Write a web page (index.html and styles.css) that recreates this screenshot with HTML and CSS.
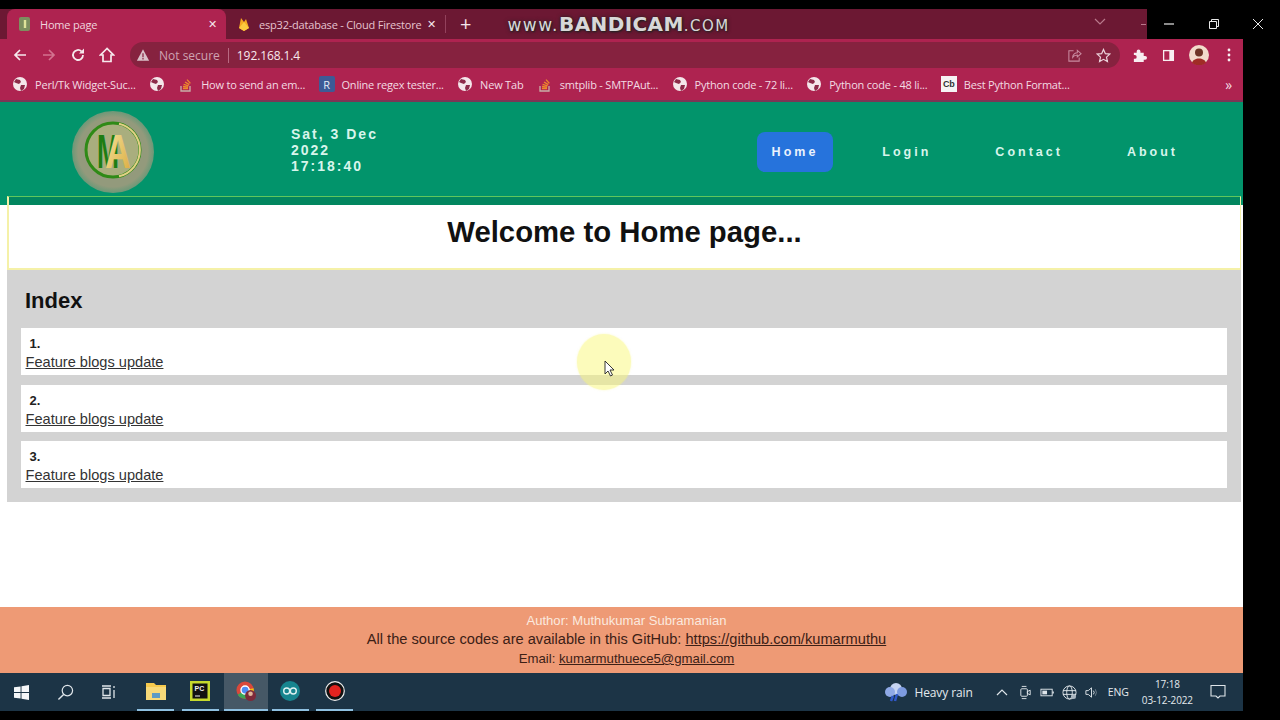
FILE: index.html
```html
<!DOCTYPE html>
<html>
<head>
    <meta charset="utf-8">
    <title>Home page</title>
    <link rel="stylesheet" href="styles.css">
</head>
<body>
<svg class="defs" width="0" height="0">
    <symbol id="globe" viewBox="0 0 16 16">
        <circle cx="8" cy="8" r="7" fill="#f4e6ea"/>
        <path d="M4 3l4 1 1 2-2 2-3-1-2-1zM9 9l4 0-1 4-3 2-1-3z" fill="#8d2a49"/>
    </symbol>
    <symbol id="so" viewBox="0 0 16 16">
        <path d="M3 10v5h9v-5" fill="none" stroke="#c9b0a8" stroke-width="1.3"/>
        <path d="M5 12.5h5M5 10.5l5 .6M5.6 8.4l5 1.4M7 6l4.3 2.6M9 3.6l3.4 3.8" fill="none" stroke="#ee8a2c" stroke-width="1.3"/>
    </symbol>
</svg>

<div class="tabrow">
    <div class="tabstrip">
        <div class="tab active">
            <svg class="favicon" viewBox="0 0 16 16"><rect x="2" y="1" width="11" height="14" rx="2" fill="#7d8f5f"/><path d="M8 4v8" stroke="#dfe39a" stroke-width="2.4"/></svg>
            <span class="tab-title">Home page</span>
            <span class="tab-close">✕</span>
        </div>
        <div class="tab">
            <svg class="favicon" viewBox="0 0 16 16"><path d="M3 12L5 2l3 4 2-3 3 9-5 3z" fill="#f6a821"/><path d="M3 12l5-6 5 6-5 3z" fill="#fcca3f"/></svg>
            <span class="tab-title">esp32-database - Cloud Firestore</span>
            <span class="tab-close">✕</span>
        </div>
        <span class="tab-sep"></span>
        <span class="tab-new">+</span>
        <div class="watermark">www.<b>BANDICAM</b><small>.COM</small></div>
        <svg class="tab-menu" viewBox="0 0 12 8"><path d="M1 1l5 5 5-5" fill="none" stroke="#b9798c" stroke-width="1.2"/></svg>
        <span class="tab-min"></span>
    </div>
    <div class="winctl">
        <svg viewBox="0 0 12 12"><path d="M1 6h10" stroke="#e8e8e8" stroke-width="1.2"/></svg>
        <svg viewBox="0 0 12 12"><path d="M1.5 3.5h7v7h-7zM3.5 3.5v-2h7v7h-2" fill="none" stroke="#e8e8e8"/></svg>
        <svg viewBox="0 0 12 12"><path d="M1 1l10 10M11 1L1 11" stroke="#e8e8e8"/></svg>
    </div>
</div>

<div class="window">
    <div class="toolbar">
        <svg class="tool" viewBox="0 0 16 16"><path d="M14 8H3M8 3L3 8l5 5" fill="none" stroke="#f6e9ed" stroke-width="1.7"/></svg>
        <svg class="tool" viewBox="0 0 16 16"><path d="M2 8h11M8 3l5 5-5 5" fill="none" stroke="#d3728f" stroke-width="1.7"/></svg>
        <svg class="tool" viewBox="0 0 16 16"><path d="M13 8a5 5 0 1 1-1.5-3.6" fill="none" stroke="#f6e9ed" stroke-width="1.8"/><path d="M14 1.5v5H9z" fill="#f6e9ed"/></svg>
        <svg class="tool" viewBox="0 0 16 16"><path d="M8 1.500L1.500 8H4v6.500h8V8h2.500z" fill="none" stroke="#f6e9ed" stroke-width="1.7"/></svg>
        <div class="omnibox">
            <svg class="warn" viewBox="0 0 16 16"><path d="M8 1.500L15 14.500H1z" fill="#d9c0c8"/><path d="M8 6v4.500M8 11.500v1.500" stroke="#86223f" stroke-width="1.400"/></svg>
            <span class="insecure">Not secure</span>
            <span class="omni-sep"></span>
            <span class="url">192.168.1.4</span>
            <svg class="omni-icon share" viewBox="0 0 16 16"><path d="M7 3H2v11h11v-4M6 10c0-3 3-5 5-5V2.500L15 6l-4 3.500V7.500c-2 0-4 1-5 2.500z" fill="none" stroke="#c98ba0" stroke-width="1.100"/></svg>
            <svg class="omni-icon" viewBox="0 0 16 16"><path d="M8 1.500l2 4.500 4.700.5-3.500 3.200 1 4.800L8 12.100 3.800 14.500l1-4.800L1.300 6.500 6 6z" fill="none" stroke="#ecd3db" stroke-width="1.300"/></svg>
        </div>
        <svg class="ext" viewBox="0 0 16 16"><path d="M2 5h3V3.500a2 2 0 0 1 4 0V5h3.500v3.500H14a2 2 0 0 1 0 4h-1.500V15H2v-3.500h1a2 2 0 0 0 0-4H2z" fill="#f8eef1"/></svg>
        <svg class="panel" viewBox="0 0 16 16"><rect x="2" y="2" width="12" height="12" fill="none" stroke="#f8eef1" stroke-width="1.600"/><rect x="9" y="2" width="5" height="12" fill="#f8eef1"/></svg>
        <svg class="avatar" viewBox="0 0 20 20"><circle cx="10" cy="10" r="10" fill="#f2dccb"/><circle cx="10" cy="7.500" r="4" fill="#6e3526"/><path d="M3 18c1-6 13-6 14 0l-4 2H7z" fill="#a02c26"/></svg>
        <svg class="dots" viewBox="0 0 4 16"><circle cx="2" cy="3" r="1.400" fill="#f8eef1"/><circle cx="2" cy="8" r="1.400" fill="#f8eef1"/><circle cx="2" cy="13" r="1.400" fill="#f8eef1"/></svg>
    </div>

    <div class="bookmarks">
        <a class="mark"><svg><use href="#globe"/></svg>Perl/Tk Widget-Suc...</a>
        <a class="mark"><svg><use href="#globe"/></svg></a>
        <a class="mark"><svg><use href="#so"/></svg>How to send an em...</a>
        <a class="mark"><span class="mark-r">R</span>Online regex tester...</a>
        <a class="mark"><svg><use href="#globe"/></svg>New Tab</a>
        <a class="mark"><svg><use href="#so"/></svg>smtplib - SMTPAut...</a>
        <a class="mark"><svg><use href="#globe"/></svg>Python code - 72 li...</a>
        <a class="mark"><svg><use href="#globe"/></svg>Python code - 48 li...</a>
        <a class="mark"><span class="mark-cb">Cb</span>Best Python Format...</a>
        <span class="mark-more">»</span>
    </div>

    <div class="page">
        <header class="site-head">
            <svg class="logo" viewBox="0 0 82 82">
                <defs>
                    <linearGradient id="gold" x1="0" y1="0" x2="1" y2="1"><stop offset="0" stop-color="#f6e6a0"/><stop offset="1" stop-color="#d9a93c"/></linearGradient>
                    <radialGradient id="halo"><stop offset=".85" stop-color="#939a7c"/><stop offset="1" stop-color="#8f9a7c" stop-opacity=".75"/></radialGradient>
                </defs>
                <circle cx="41" cy="41" r="41" fill="url(#halo)"/>
                <circle cx="41" cy="39" r="27" fill="#a9ae7e" stroke="#2f8a16" stroke-width="3"/>
                <path d="M47 12.700a27 27 0 0 1 0 52.600" fill="none" stroke="#e3cf86" stroke-width="2"/>
                <text class="logo-m" transform="translate(25 57) scale(.55 1)">M</text>
                <text class="logo-a" transform="translate(33 57) scale(.75 1)" fill="url(#gold)">A</text>
            </svg>
            <div class="clock">
                <div>Sat, 3 Dec</div>
                <div>2022</div>
                <div>17:18:40</div>
            </div>
            <nav class="nav">
                <a class="nav-item current">Home</a>
                <a class="nav-item">Login</a>
                <a class="nav-item">Contact</a>
                <a class="nav-item">About</a>
            </nav>
        </header>

        <section class="welcome">
            <h1>Welcome to Home page...</h1>
        </section>

        <section class="index">
            <h2>Index</h2>
            <div class="card">
                <div class="card-num">1.</div>
                <a class="card-link">Feature blogs update</a>
            </div>
            <div class="card">
                <div class="card-num">2.</div>
                <a class="card-link">Feature blogs update</a>
            </div>
            <div class="card">
                <div class="card-num">3.</div>
                <a class="card-link">Feature blogs update</a>
            </div>
        </section>

        <footer class="site-foot">
            <div class="author">Author: Muthukumar Subramanian</div>
            <div class="source">All the source codes are available in this GitHub: <a>https://github.com/kumarmuthu</a></div>
            <div class="email">Email: <a>kumarmuthuece5@gmail.com</a></div>
        </footer>

        <div class="cursor-glow">
            <svg class="cursor" viewBox="0 0 12 18"><path d="M1 1v13l3-3 2.500 5 2-1-2.500-5h4z" fill="#fff" stroke="#222" stroke-width=".9"/></svg>
        </div>
    </div>

    <div class="taskbar">
        <svg class="task-start" viewBox="0 0 16 16"><path d="M0 2.500l7-1v6H0zM8 1.300l8-1.200v7.400H8zM0 8.500h7v6l-7-1zM8 8.500h8v7.400l-8-1.200z" fill="#f4f6f8"/></svg>
        <svg class="task-search" viewBox="0 0 18 18"><circle cx="11" cy="7" r="5.500" fill="none" stroke="#dfe5ea" stroke-width="1.300"/><path d="M7 11l-5.500 5.500" stroke="#dfe5ea" stroke-width="1.500"/></svg>
        <svg class="task-view" viewBox="0 0 16 14"><path d="M1 1h9M1 13h9M2 3.500h7v7H2zM13 1v2M13 5v8" fill="none" stroke="#dfe5ea" stroke-width="1.300"/></svg>
        <div class="task-app">
            <svg viewBox="0 0 20 18"><path d="M0 1h8l2 2h10v3H0z" fill="#f5c94d"/><rect y="5" width="20" height="13" fill="#f7d978"/><rect x="6" y="11" width="8" height="5" fill="#5d9bc4"/></svg>
        </div>
        <div class="task-app">
            <svg viewBox="0 0 20 20"><rect width="20" height="20" fill="#c6d92d"/><rect x="2.500" y="2.500" width="15" height="15" fill="#111"/><path d="M5 15h5" stroke="#eee"/><text class="pc-mark" x="4.500" y="10">PC</text></svg>
        </div>
        <div class="task-app selected">
            <svg viewBox="0 0 22 22"><circle cx="10" cy="10" r="9.500" fill="#d9483b"/><path d="M10 10L1.800 15a9.500 9.500 0 0 0 12 3.500z" fill="#3aa757"/><path d="M10 10l4 8.500A9.500 9.500 0 0 0 19.400 8z" fill="#f4c20d"/><circle cx="10" cy="10" r="4.500" fill="#4c8bf5" stroke="#fff" stroke-width="1.500"/><circle cx="16" cy="16" r="6" fill="#7d2a3a"/><circle cx="16" cy="14" r="2.500" fill="#e0b59a"/></svg>
        </div>
        <div class="task-app">
            <svg viewBox="0 0 20 20"><circle cx="10" cy="10" r="10" fill="#17858f"/><circle cx="6.700" cy="10" r="3" fill="none" stroke="#dff2f2" stroke-width="1.400"/><circle cx="13.300" cy="10" r="3" fill="none" stroke="#dff2f2" stroke-width="1.400"/></svg>
        </div>
        <div class="task-app">
            <svg viewBox="0 0 20 20"><circle cx="10" cy="10" r="9.300" fill="#111" stroke="#eee" stroke-width="1.200"/><circle cx="10" cy="10" r="6" fill="#e2231f"/></svg>
        </div>
        <div class="tray">
            <svg class="weather" viewBox="0 0 24 20"><circle cx="12" cy="7" r="6" fill="#c6d4f2"/><circle cx="6" cy="10" r="5" fill="#8fa9e6"/><circle cx="18" cy="10" r="5" fill="#7d9be0"/><path d="M9 14l-2 5M13 12l-2 7" stroke="#2f58c9" stroke-width="2.500"/></svg>
            <span class="weather-text">Heavy rain</span>
            <svg class="tray-up" viewBox="0 0 12 8"><path d="M1 7l5-5 5 5" fill="none" stroke="#dfe5ea" stroke-width="1.200"/></svg>
            <svg class="tray-icon" viewBox="0 0 14 16"><rect x="2" y="4" width="7" height="8" rx="1" fill="none" stroke="#dfe5ea"/><path d="M9 7l3-1.500v5L9 9zM3 1.500h5M3 14.500h5" fill="none" stroke="#dfe5ea"/></svg>
            <svg class="tray-icon" viewBox="0 0 16 16"><rect x="1" y="4.500" width="12" height="7" fill="none" stroke="#dfe5ea"/><rect x="2.500" y="6" width="5" height="4" fill="#dfe5ea"/><path d="M14 7v2" stroke="#dfe5ea" stroke-width="1.500"/></svg>
            <svg class="tray-icon" viewBox="0 0 16 16"><circle cx="8" cy="8" r="7" fill="none" stroke="#dfe5ea"/><ellipse cx="8" cy="8" rx="3" ry="7" fill="none" stroke="#dfe5ea"/><path d="M1 6h14M1 10h14" stroke="#dfe5ea"/><circle cx="12.500" cy="12.500" r="2.500" fill="#a9b5bf"/></svg>
            <svg class="tray-icon" viewBox="0 0 16 16"><path d="M2 6h2.500L8 3v10L4.500 10H2z" fill="none" stroke="#dfe5ea"/><path d="M10 6a3 3 0 0 1 0 4" fill="none" stroke="#dfe5ea"/><path d="M12 4.500a6 6 0 0 1 0 7" fill="none" stroke="#74838f"/></svg>
            <span class="lang">ENG</span>
            <div class="tray-clock">
                <div>17:18</div>
                <div>03-12-2022</div>
            </div>
            <svg class="notify" viewBox="0 0 16 16"><path d="M1 1.500h14v10.500h-5l-2 2-2-2H1z" fill="none" stroke="#dfe5ea" stroke-width="1.100"/></svg>
        </div>
    </div>
</div>
</body>
</html>
```

FILE: styles.css
```css
html, body {
    margin: 0;
    height: 720px;
    overflow: hidden;
    background: #000;
    font-family: "Liberation Sans", Arial, sans-serif;
}
.defs { position: absolute; }
a { color: inherit; }

/* browser chrome */
.tabrow {
    display: flex;
    height: 30px;
    padding-top: 9px;
}
.tabstrip {
    width: 1147px;
    display: flex;
    align-items: center;
    background: #6c1833;
    padding-left: 7px;
    box-sizing: border-box;
    font-family: "Open Sans", sans-serif;
    overflow: hidden;
}
.tab {
    width: 219px;
    height: 30px;
    box-sizing: border-box;
    display: flex;
    align-items: center;
    padding: 0 9px 0 10px;
    color: #e6c3cf;
    font-size: 11px;
    letter-spacing: -.2px;
}
.tab.active {
    background: #ae2350;
    border-radius: 8px 8px 0 0;
    color: #f0d5de;
}
.favicon { width: 16px; height: 16px; flex: none; margin-right: 7px; }
.tab-title { flex: 1; white-space: nowrap; overflow: hidden; }
.tab-close { font-size: 11px; color: #f5e6eb; margin-left: 4px; font-family: "DejaVu Sans", sans-serif; }
.tab-sep { width: 1px; height: 18px; background: #93415c; }
.tab-new { color: #f5e6eb; font-size: 20px; margin-left: 14px; font-weight: 400; line-height: 20px; }
.watermark {
    margin-left: 36px;
    color: #d8d8d8;
    font-family: "DejaVu Sans", sans-serif;
    font-size: 17px;
    letter-spacing: 1.500px;
    text-shadow: 0 0 4px #222, 1px 1px 2px #222;
    white-space: nowrap;
}
.watermark b { font-weight: 700; font-size: 20px; letter-spacing: .4px; }
.watermark small { font-size: 15px; letter-spacing: 1.500px; }
.tab-menu { width: 12px; height: 8px; margin-left: 364px; margin-top: -4px; flex: none; }
.tab-min { width: 5px; height: 1px; background: #b9798c; margin-left: 35px; flex: none; }
.winctl {
    width: 133px;
    display: flex;
    align-items: center;
    justify-content: space-between;
    padding: 0 16px 0 16px;
    box-sizing: border-box;
}
.winctl svg { width: 12px; height: 12px; }

.window { width: 1243px; }
.toolbar {
    height: 31px;
    box-sizing: border-box;
    padding-top: 1px;
    background: #ae2350;
    display: flex;
    align-items: center;
    padding-left: 12px;
}
.tool { width: 16px; height: 16px; margin-right: 13px; flex: none; }
.omnibox {
    width: 990px;
    height: 26px;
    margin-left: 2px;
    border-radius: 13px;
    background: #86223f;
    display: flex;
    align-items: center;
    padding-left: 6px;
    box-sizing: border-box;
    font-family: "Open Sans", sans-serif;
    font-size: 12px;
}
.warn { width: 14px; height: 14px; margin-right: 9px; }
.insecure { color: #cfa3b2; }
.omni-sep { width: 1px; height: 15px; background: #b86a82; margin: 0 8px; }
.url { color: #f7e9ee; letter-spacing: -.1px; }
.omni-icon { width: 15px; height: 15px; margin-left: 14px; }
.share { margin-left: auto; }
.omni-icon:last-child { margin-right: 9px; }
.ext { width: 15px; height: 15px; margin-left: 12px; }
.panel { width: 13px; height: 13px; margin-left: 15px; }
.avatar { width: 20px; height: 20px; margin-left: 14px; }
.dots { width: 4px; height: 16px; margin-left: 18px; }

.bookmarks {
    height: 30px;
    box-sizing: border-box;
    padding-bottom: 2px;
    background: #ae2350;
    display: flex;
    align-items: center;
    gap: 13.300px;
    padding-left: 12px;
    font-family: "Open Sans", sans-serif;
    font-size: 11px;
    letter-spacing: -.2px;
    color: #f3dbe3;
    white-space: nowrap;
}
.mark { display: flex; align-items: center; gap: 7px; }
.mark svg { width: 16px; height: 16px; }
.mark-r, .mark-cb {
    width: 16px;
    height: 16px;
    display: flex;
    align-items: center;
    justify-content: center;
    font-size: 11px;
}
.mark-r { background: #3d5a96; color: #e6ecf7; border-radius: 2px; }
.mark-cb { background: #f6f3f4; color: #333; font-family: "Liberation Sans", sans-serif; font-weight: 700; font-size: 9px; }
.mark-more { margin-left: auto; margin-right: 11px; font-size: 14px; }

/* the page itself */
.page {
    position: relative;
    height: 573px;
    background: #fff;
    border-top: 2px solid #7c3656;
    box-sizing: border-box;
    display: flex;
    flex-direction: column;
    overflow: hidden;
}
.site-head {
    height: 100px;
    padding-bottom: 3px;
    flex: none;
    background: #02946b;
    display: flex;
    align-items: center;
    padding-left: 72px;
    padding-right: 50px;
}
.logo { width: 82px; height: 82px; flex: none; }
.logo-m { font: 700 48px "Liberation Sans", sans-serif; fill: #1d7d12; }
.logo-a { font: 700 48px "Liberation Sans", sans-serif; }
.clock {
    margin-left: 137px;
    margin-bottom: 4px;
    color: #d8f5ec;
    font-size: 14px;
    font-weight: 700;
    letter-spacing: 2px;
    line-height: 16px;
}
.nav { margin-left: auto; display: flex; gap: 34px; }
.nav-item {
    padding: 0 15px;
    height: 40px;
    line-height: 40px;
    border-radius: 8px;
    color: #d8f5ec;
    font-size: 12.500px;
    font-weight: 700;
    letter-spacing: 3px;
}
.nav-item.current { background: #2673dc; color: #eaf2fc; }

.welcome {
    margin: -9px 2px 0 7px;
    flex: none;
    height: 74px;
    box-sizing: border-box;
    border: solid #f5f1a8;
    border-width: 1px 1px 2px 2px;
    border-top-color: #5fc75c;
    background: linear-gradient(#02865f 8px, #fff 8px);
    padding-top: 18px;
}
.welcome h1 {
    margin: 0;
    text-align: center;
    color: #111;
    font-size: 29.300px;
    line-height: 34px;
}
.index {
    margin: 0 2px 0 7px;
    background: #d3d3d3;
    padding: 19px 14px 14px;
    flex: none;
    display: flex;
    flex-direction: column;
    gap: 9.500px;
}
.index h2 {
    margin: 0 0 5.500px 4px;
    color: #111;
    font-size: 22px;
    line-height: 24px;
}
.card {
    background: #fff;
    height: 47px;
    box-sizing: border-box;
    padding: 8px 0 0 4.500px;
}
.card-num {
    margin-left: 4px;
    font-size: 13px;
    font-weight: 700;
    line-height: 15px;
    color: #222;
}
.card-link {
    display: block;
    font-size: 14.600px;
    line-height: 22px;
    color: #333;
    text-decoration: underline;
    width: max-content;
}

.site-foot {
    margin-top: auto;
    height: 66px;
    flex: none;
    background: #ee9a75;
    box-sizing: border-box;
    padding: 6px 0 0 10px;
    text-align: center;
    color: #3c2016;
}
.site-foot a { text-decoration: underline; }
.author { color: #fbe9df; font-size: 13.100px; line-height: 16px; }
.source { font-size: 14.630px; line-height: 20px; }
.email { font-size: 13.200px; line-height: 20px; }

.cursor-glow {
    position: absolute;
    left: 577px;
    top: 232px;
    width: 54px;
    height: 56px;
    border-radius: 50%;
    background: rgba(250, 248, 120, .5);
    box-shadow: 0 0 2px rgba(250, 248, 120, .5);
}
.cursor { position: absolute; left: 27px; top: 26px; width: 12px; height: 18px; }

/* windows taskbar */
.taskbar {
    height: 38px;
    background: #1c3446;
    display: flex;
    align-items: center;
    color: #e4e9ed;
    font-family: "Open Sans", sans-serif;
}
.task-start { width: 15px; height: 15px; margin-left: 14px; }
.task-search { width: 17px; height: 17px; margin-left: 28px; }
.task-view { width: 16px; height: 14px; margin-left: 27px; margin-right: 20px; }
.task-app {
    width: 37px;
    height: 38px;
    box-sizing: border-box;
    margin-right: 7.500px;
    display: flex;
    align-items: center;
    justify-content: center;
    border-bottom: 2px solid #8fc0e0;
}
.task-app svg { width: 20px; height: 20px; }
.task-app.selected { width: 44px; margin: 0 3.500px 0 -2px; background: #465866; }
.pc-mark { font: 700 7px "Liberation Sans", sans-serif; fill: #eee; }
.tray { margin-left: auto; display: flex; align-items: center; height: 38px; }
.weather { width: 24px; height: 20px; }
.weather-text { font-size: 12px; margin-left: 6px; letter-spacing: -.1px; }
.tray-up { width: 12px; height: 8px; margin-left: 23px; }
.tray-icon { width: 15px; height: 15px; margin-left: 7px; }
.tray-up + .tray-icon { margin-left: 10px; }
.lang { font-size: 10.500px; margin-left: 9px; letter-spacing: -.1px; }
.tray-clock { margin-left: 13px; text-align: center; font-size: 10px; line-height: 16px; letter-spacing: -.1px; }
.notify { width: 16px; height: 16px; margin-left: 17px; margin-right: 17px; }
```
